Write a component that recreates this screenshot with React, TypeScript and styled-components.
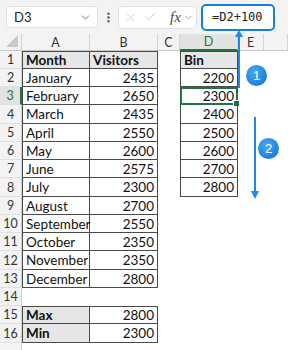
import React from 'react';
import styled, { createGlobalStyle, css } from 'styled-components';
import { ChevronDown, X, Check, EllipsisVertical } from 'lucide-react';

const GlobalStyle = createGlobalStyle`
  html, body { margin: 0; padding: 0; background: #fff; }
  body { font-family: Lato, 'Liberation Sans', sans-serif; }
`;

type Kind = 'text' | 'num' | 'head' | 'empty';

interface CellData {
  v?: string;
  kind: Kind;
  boxed?: boolean;
  top?: boolean;
  left?: boolean;
  sel?: boolean;
}

const months: [string, number][] = [
  ['January', 2435], ['February', 2650], ['March', 2435], ['April', 2550],
  ['May', 2600], ['June', 2575], ['July', 2300], ['August', 2700],
  ['September', 2550], ['October', 2350], ['November', 2350], ['December', 2800],
];
const bins = [2200, 2300, 2400, 2500, 2600, 2700, 2800];
const columns = ['A', 'B', 'C', 'D', 'E', ''];

const empty: CellData = { kind: 'empty' };

function buildRow(r: number): CellData[] {
  let a: CellData = empty;
  let b: CellData = empty;
  let d: CellData = empty;
  if (r === 1) {
    a = { v: 'Month', kind: 'head', boxed: true, top: true, left: true };
    b = { v: 'Visitors', kind: 'head', boxed: true, top: true };
    d = { v: 'Bin', kind: 'head', boxed: true, top: true, left: true };
  } else if (r <= 13) {
    const [m, n] = months[r - 2];
    a = { v: m, kind: 'text', boxed: true, left: true };
    b = { v: String(n), kind: 'num', boxed: true };
  } else if (r === 15) {
    a = { v: 'Max', kind: 'head', boxed: true, top: true, left: true };
    b = { v: '2800', kind: 'num', boxed: true, top: true };
  } else if (r === 16) {
    a = { v: 'Min', kind: 'head', boxed: true, left: true };
    b = { v: '2300', kind: 'num', boxed: true };
  }
  if (r >= 2 && r <= 8) {
    d = { v: String(bins[r - 2]), kind: 'num', boxed: true, left: true, sel: r === 3 };
  }
  return [a, b, empty, d, empty, empty];
}

// row 17 is only a sliver at the bottom edge, so its number is not shown
const rows = Array.from({ length: 17 }, (_, i) => i + 1);

const App: React.FC = () => (
  <Page>
    <GlobalStyle />
    <Toolbar>
      <NameBox>
        <span>D3</span>
        <ChevronDown size={13} color="#666" strokeWidth={1.6} />
      </NameBox>
      <Dots>
        <EllipsisVertical size={13} color="#555" strokeWidth={2.4} />
      </Dots>
      <FxBox>
        <X size={13} color="#c4c4c4" strokeWidth={1.4} />
        <Check size={14} color="#c4c4c4" strokeWidth={1.4} />
        <FxLabel>fx</FxLabel>
        <ChevronDown size={11} color="#888" strokeWidth={1.6} />
      </FxBox>
      <FormulaBox>=D2+100</FormulaBox>
    </Toolbar>
    <Sheet>
      <Corner>
        <svg width="12" height="12" viewBox="0 0 12 12">
          <polygon points="12,0 12,12 0,12" fill="#c8c8c8" />
        </svg>
      </Corner>
      {columns.map((c) => (
        <ColHead key={c || 'F'} $active={c === 'D'}>{c}</ColHead>
      ))}
      {rows.map((r) => (
        <React.Fragment key={r}>
          <RowHead $active={r === 3}>{r < 17 ? r : ''}</RowHead>
          {buildRow(r).map((cell, i) => (
            <Cell
              key={i}
              $kind={cell.kind}
              $boxed={cell.boxed}
              $top={cell.top}
              $left={cell.left}
              $sel={cell.sel}
            >
              {cell.v}
            </Cell>
          ))}
        </React.Fragment>
      ))}
    </Sheet>
    <Arrows width="288" height="350" viewBox="0 0 288 350">
      <line x1="239" y1="36" x2="239" y2="88" stroke="#1f8ae3" strokeWidth="2" />
      <polygon points="239,30 235,37 243,37" fill="#1f8ae3" />
      <line x1="255" y1="117" x2="255" y2="192" stroke="#1f8ae3" strokeWidth="2" />
      <polygon points="255,199 251,191 259,191" fill="#1f8ae3" />
    </Arrows>
    <Badge style={{ left: 246, top: 65 }}>1</Badge>
    <Badge style={{ left: 258, top: 138 }}>2</Badge>
  </Page>
);

const Page = styled.div`
  position: relative;
  width: 288px;
  height: 350px;
  overflow: hidden;
  background: #fff;
  display: flex;
  flex-direction: column;
`;

const Toolbar = styled.div`
  height: 34px;
  flex-shrink: 0;
  display: flex;
  align-items: center;
  padding-left: 6px;
  background: #f3f3f3;
`;

const NameBox = styled.div`
  box-sizing: border-box;
  width: 92px;
  height: 22px;
  display: flex;
  align-items: center;
  justify-content: space-between;
  padding: 0 5px 0 7px;
  background: #fff;
  border: 1px solid #e1e1e1;
  border-radius: 4px;
  font-size: 13px;
  color: #222;
`;

const Dots = styled.div`
  width: 19px;
  display: flex;
  justify-content: center;
  margin-left: 1px;
`;

const FxBox = styled.div`
  box-sizing: border-box;
  width: 79px;
  height: 23px;
  display: flex;
  align-items: center;
  gap: 6px;
  padding-left: 5px;
  background: #fff;
  border: 1px solid #e1e1e1;
  border-radius: 4px;
`;

const FxLabel = styled.span`
  margin-left: 7px;
  font-family: 'Liberation Serif', serif;
  font-style: italic;
  font-size: 15px;
  color: #444;
  margin-right: -4px;
`;

const FormulaBox = styled.div`
  box-sizing: border-box;
  width: 74px;
  height: 27px;
  margin-left: 4px;
  display: flex;
  align-items: center;
  padding-left: 9px;
  background: #fff;
  border: 2px solid #1b7fd8;
  border-radius: 5px;
  font-family: 'DejaVu Sans Mono', monospace;
  font-size: 12px;
  color: #222;
`;

const Sheet = styled.div`
  display: grid;
  grid-template-columns: 22px 68px 68px 22px 58px 26px 24px;
  grid-template-rows: 17px repeat(4, 18px 18px 18px 19px) 18px;
  font-size: 13.5px;
  color: #111;
`;

const Corner = styled.div`
  display: flex;
  align-items: flex-end;
  justify-content: flex-end;
  padding: 0 3px 3px 0;
  background: #f3f3f3;
  border-right: 1px solid #d0d0d0;
  border-bottom: 1px solid #c8c8c8;
  box-sizing: border-box;
`;

const ColHead = styled.div<{ $active?: boolean }>`
  box-sizing: border-box;
  display: flex;
  align-items: center;
  justify-content: center;
  font-size: 12.5px;
  background: ${({ $active }) => ($active ? '#e2e2e2' : '#f3f3f3')};
  color: ${({ $active }) => ($active ? '#217346' : '#333')};
  border-right: 1px solid #d4d4d4;
  border-bottom: ${({ $active }) => ($active ? '2px solid #217346' : '1px solid #c8c8c8')};
`;

const RowHead = styled.div<{ $active?: boolean }>`
  box-sizing: border-box;
  display: flex;
  align-items: center;
  justify-content: center;
  font-size: 12.5px;
  background: ${({ $active }) => ($active ? '#e2e2e2' : '#f3f3f3')};
  color: ${({ $active }) => ($active ? '#217346' : '#333')};
  border-right: ${({ $active }) => ($active ? '2px solid #217346' : '1px solid #d0d0d0')};
  border-bottom: 1px solid #e0e0e0;
`;

const line = '1px solid #4a4a4a';

const Cell = styled.div<{ $kind: Kind; $boxed?: boolean; $top?: boolean; $left?: boolean; $sel?: boolean }>`
  position: relative;
  box-sizing: border-box;
  display: flex;
  align-items: center;
  padding: 0 3px;
  white-space: nowrap;
  overflow: visible;
  ${({ $kind }) => $kind === 'num' && css`justify-content: flex-end;`}
  ${({ $kind }) => $kind === 'head' && css`
    font-weight: 700;
    background: #e7e6e6;
  `}
  ${({ $boxed }) => $boxed && css`
    border-right: ${line};
    border-bottom: ${line};
  `}
  ${({ $top }) => $top && css`border-top: ${line};`}
  ${({ $left }) => $left && css`border-left: ${line};`}
  ${({ $sel }) => $sel && css`
    outline: 2px solid #217346;
    outline-offset: -2px;
    &::after {
      content: '';
      position: absolute;
      right: -3px;
      bottom: -3px;
      width: 5px;
      height: 5px;
      background: #217346;
      border: 1px solid #fff;
    }
  `}
`;

const Arrows = styled.svg`
  position: absolute;
  left: 0;
  top: 0;
  pointer-events: none;
`;

const Badge = styled.div`
  position: absolute;
  width: 21px;
  height: 21px;
  border-radius: 50%;
  display: flex;
  align-items: center;
  justify-content: center;
  background: radial-gradient(circle at 40% 35%, #4aa8f2 0%, #1a82dd 70%, #1370c8 100%);
  color: #fff;
  font-family: 'Liberation Sans', sans-serif;
  font-size: 13px;
  box-shadow: 0 0 0 1px rgba(255, 255, 255, 0.6);
`;

export default App;
